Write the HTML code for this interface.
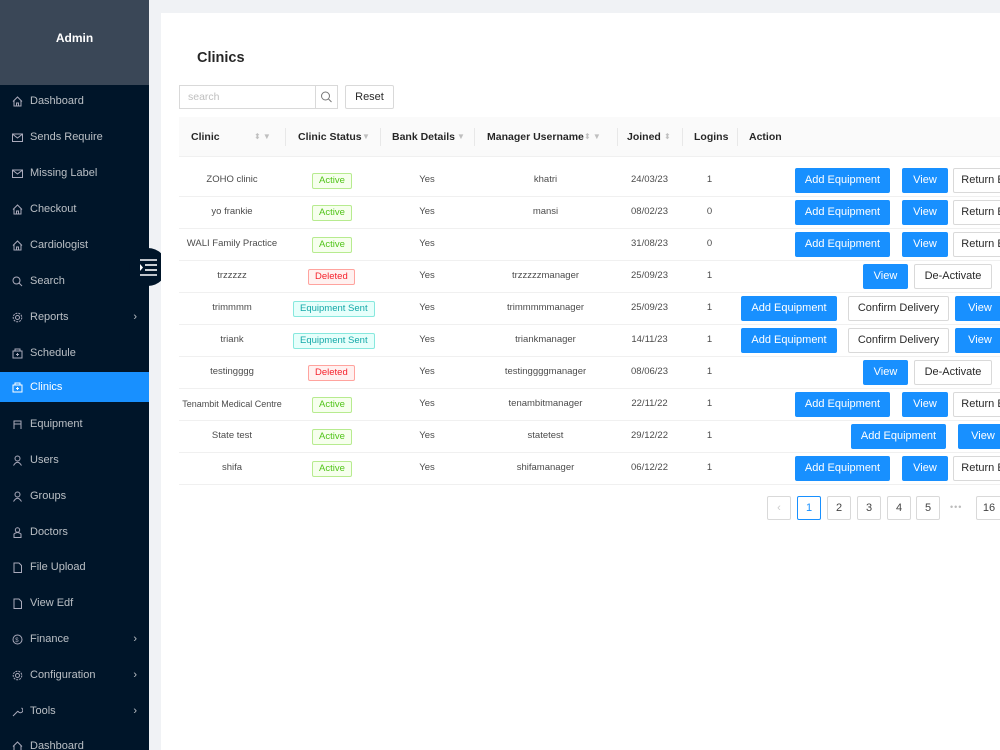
<!DOCTYPE html>
<html><head><meta charset="utf-8"><style>
*{box-sizing:border-box;margin:0;padding:0}
html{width:1000px;height:750px;overflow:hidden}
body{width:1000px;height:750px;overflow:hidden;background:#f0f2f5;font-family:"Liberation Sans","DejaVu Sans",sans-serif;position:relative;color:rgba(0,0,0,.85)}
.sb{position:absolute;left:0;top:0;width:149px;height:750px;background:#001529}
.sbh{position:absolute;left:0;top:0;width:149px;height:85px;background:#3a4757;color:#fff;font-weight:bold;font-size:12px;text-align:center;line-height:76px}
.mi{position:absolute;left:0;width:149px;height:30px;line-height:30px;color:rgba(255,255,255,.72);font-size:11px;padding-left:30px}
.mi svg{position:absolute;left:12px;top:10px}
.mi.act{background:#1890ff;color:#fff}
.arr{position:absolute;right:12px;top:0;font-size:11px}
.tog{position:absolute;left:129px;top:248px;width:38px;height:38px;border-radius:19px;background:#001529}
.card{position:absolute;left:161px;top:13px;width:839px;height:737px;background:#fff}
.a{position:absolute}
.t{position:absolute;font-size:9.5px;color:rgba(0,0,0,.72);text-align:center;line-height:32px;height:32px;white-space:nowrap}
.tag{position:absolute;font-size:9.5px;height:16px;line-height:14px;padding:0 6px;border:1px solid;border-radius:2px;white-space:nowrap}
.g{color:#52c41a;background:#f6ffed;border-color:#b7eb8f}
.r{color:#f5222d;background:#fff1f0;border-color:#ffa39e}
.c{color:#13a8a8;background:#e6fffb;border-color:#87e8de}
.b{position:absolute;height:25px;line-height:23px;font-size:11px;text-align:center;border:1px solid #d9d9d9;background:#fff;color:rgba(0,0,0,.85);border-radius:2px;white-space:nowrap;overflow:hidden}
.bp{background:#1890ff;border-color:#1890ff;color:#fff}
.line{position:absolute;left:179px;width:821px;height:1px;background:#f0f0f0}
.th{position:absolute;top:117px;height:40px;line-height:40px;font-size:10.5px;font-weight:bold;color:rgba(0,0,0,.85);white-space:nowrap}
.sep{position:absolute;top:128px;width:1px;height:18px;background:#e8e8e8}
.ic{position:absolute;top:117px;line-height:40px;font-size:8px;color:#bfbfbf}
.pg{position:absolute;top:496px;width:24px;height:24px;border:1px solid #d9d9d9;border-radius:2px;font-size:11px;text-align:center;line-height:22px;color:rgba(0,0,0,.75)}
</style></head><body>
<div class="sb">
<div class="sbh">Admin</div>
</div>
<div class="tog"><svg width="38" height="38" viewBox="0 0 38 38"><g stroke="#fff" stroke-width="1.6"><line x1="11" y1="12" x2="28" y2="12"/><line x1="16" y1="17" x2="28" y2="17"/><line x1="16" y1="22" x2="28" y2="22"/><line x1="11" y1="27" x2="28" y2="27"/></g><path d="M11 16 L14 19.5 L11 23Z" fill="#fff"/></svg></div>

<div class="mi" style="top:86px"><svg width="11" height="11" viewBox="0 0 11 11" fill="none" stroke="#aab" stroke-width="1"><path d="M1 5.5 L5.5 1 L10 5.5 M2 4.5 V10 H9 V4.5 M4.5 10 V7 H6.5 V10"/></svg>Dashboard</div>
<div class="mi" style="top:122px"><svg width="11" height="11" viewBox="0 0 11 11" fill="none" stroke="#aab"><rect x="0.5" y="2" width="10" height="7.5"/><path d="M1 2.5 L5.5 6 L10 2.5"/></svg>Sends Require</div>
<div class="mi" style="top:158px"><svg width="11" height="11" viewBox="0 0 11 11" fill="none" stroke="#aab"><rect x="0.5" y="2" width="10" height="7.5"/><path d="M1 2.5 L5.5 6 L10 2.5"/></svg>Missing Label</div>
<div class="mi" style="top:194px"><svg width="11" height="11" viewBox="0 0 11 11" fill="none" stroke="#aab"><path d="M1 5.5 L5.5 1 L10 5.5 M2 4.5 V10 H9 V4.5 M4.5 10 V7 H6.5 V10"/></svg>Checkout</div>
<div class="mi" style="top:230px"><svg width="11" height="11" viewBox="0 0 11 11" fill="none" stroke="#aab"><path d="M1 5.5 L5.5 1 L10 5.5 M2 4.5 V10 H9 V4.5 M4.5 10 V7 H6.5 V10"/></svg>Cardiologist</div>
<div class="mi" style="top:266px"><svg width="11" height="11" viewBox="0 0 11 11" fill="none" stroke="#aab"><circle cx="4.5" cy="4.5" r="3.5"/><path d="M7 7 L10 10"/></svg>Search</div>
<div class="mi" style="top:302px"><svg width="11" height="11" viewBox="0 0 11 11" fill="none" stroke="#aab"><circle cx="5.5" cy="5.5" r="2"/><circle cx="5.5" cy="5.5" r="4.3" stroke-dasharray="2 1"/></svg>Reports<span class="arr">›</span></div>
<div class="mi" style="top:338px"><svg width="11" height="11" viewBox="0 0 11 11" fill="none" stroke="#aab"><rect x="1" y="3" width="9" height="7"/><path d="M3 3 V1 H8 V3 M5.5 5 V8 M4 6.5 H7"/></svg>Schedule</div>
<div class="mi act" style="top:372px"><svg width="11" height="11" viewBox="0 0 11 11" fill="none" stroke="#fff"><rect x="1" y="3" width="9" height="7"/><path d="M3 3 V1 H8 V3 M5.5 5 V8 M4 6.5 H7"/></svg>Clinics</div>
<div class="mi" style="top:409px"><svg width="11" height="11" viewBox="0 0 11 11" fill="none" stroke="#aab"><path d="M2 10 V2 H9 V10 M2 5 H9"/></svg>Equipment</div>
<div class="mi" style="top:445px"><svg width="11" height="11" viewBox="0 0 11 11" fill="none" stroke="#aab"><circle cx="5.5" cy="3.5" r="2.5"/><path d="M1.5 10.5 Q5.5 4 9.5 10.5"/></svg>Users</div>
<div class="mi" style="top:481px"><svg width="11" height="11" viewBox="0 0 11 11" fill="none" stroke="#aab"><circle cx="5.5" cy="3.5" r="2.5"/><path d="M1.5 10.5 Q5.5 4 9.5 10.5"/></svg>Groups</div>
<div class="mi" style="top:517px"><svg width="11" height="11" viewBox="0 0 11 11" fill="none" stroke="#aab"><circle cx="5.5" cy="3" r="2.2"/><path d="M2 10.5 V7 Q5.5 4 9 7 V10.5 Z"/></svg>Doctors</div>
<div class="mi" style="top:552px"><svg width="11" height="11" viewBox="0 0 11 11" fill="none" stroke="#aab"><path d="M2 1 H7 L9.5 3.5 V10.5 H2 Z"/></svg>File Upload</div>
<div class="mi" style="top:588px"><svg width="11" height="11" viewBox="0 0 11 11" fill="none" stroke="#aab"><path d="M2 1 H7 L9.5 3.5 V10.5 H2 Z"/></svg>View Edf</div>
<div class="mi" style="top:624px"><svg width="11" height="11" viewBox="0 0 11 11" fill="none" stroke="#aab"><circle cx="5.5" cy="5.5" r="4.5"/><text x="3.3" y="8" font-size="6" fill="#aab" stroke="none">$</text></svg>Finance<span class="arr">›</span></div>
<div class="mi" style="top:660px"><svg width="11" height="11" viewBox="0 0 11 11" fill="none" stroke="#aab"><circle cx="5.5" cy="5.5" r="2"/><circle cx="5.5" cy="5.5" r="4.3" stroke-dasharray="2 1"/></svg>Configuration<span class="arr">›</span></div>
<div class="mi" style="top:696px"><svg width="11" height="11" viewBox="0 0 11 11" fill="none" stroke="#aab"><path d="M1 10 L6 5 M6 5 A2.5 2.5 0 1 0 9.5 2"/></svg>Tools<span class="arr">›</span></div>
<div class="mi" style="top:731px"><svg width="11" height="11" viewBox="0 0 11 11" fill="none" stroke="#aab"><path d="M1 5.5 L5.5 1 L10 5.5 M2 4.5 V10 H9 V4.5"/></svg>Dashboard</div>

<div class="card"></div>
<div class="a" style="left:197px;top:50px;font-size:14.5px;font-weight:bold;color:rgba(0,0,0,.85)">Clinics</div>
<div class="a" style="left:179px;top:85px;width:137px;height:24px;border:1px solid #d9d9d9;font-size:10.5px;color:#bfbfbf;line-height:22px;padding-left:8px">search</div>
<div class="a" style="left:315px;top:85px;width:23px;height:24px;border:1px solid #d9d9d9"><svg width="21" height="22" viewBox="0 0 21 22" fill="none" stroke="#777"><circle cx="9.5" cy="10" r="4"/><path d="M12.5 13 L15.5 16"/></svg></div>
<div class="b" style="left:345px;top:85px;width:49px;height:24px;line-height:22px;font-size:11px">Reset</div>

<div class="a" style="left:179px;top:117px;width:821px;height:40px;background:#fafafa;border-bottom:1px solid #f0f0f0"></div>
<div class="th" style="left:191px">Clinic</div><div class="ic" style="left:254px">⬍ ▼</div><div class="sep" style="left:285px"></div>
<div class="th" style="left:298px">Clinic Status</div><div class="ic" style="left:362px">▼</div><div class="sep" style="left:380px"></div>
<div class="th" style="left:392px">Bank Details</div><div class="ic" style="left:457px">▼</div><div class="sep" style="left:474px"></div>
<div class="th" style="left:487px">Manager Username</div><div class="ic" style="left:584px">⬍ ▼</div><div class="sep" style="left:617px"></div>
<div class="th" style="left:627px">Joined</div><div class="ic" style="left:664px">⬍</div><div class="sep" style="left:682px"></div>
<div class="th" style="left:694px">Logins</div><div class="sep" style="left:737px"></div>
<div class="th" style="left:749px">Action</div>

<div class="t" style="left:179px;width:106px;top:164px">ZOHO clinic</div><div class="tag g" style="left:312px;top:173px">Active</div><div class="t" style="left:380px;width:94px;top:164px">Yes</div><div class="t" style="left:474px;width:143px;top:164px">khatri</div><div class="t" style="left:617px;width:65px;top:164px">24/03/23</div><div class="t" style="left:682px;width:55px;top:164px">1</div>
<div class="line" style="top:196px"></div>
<div class="t" style="left:179px;width:106px;top:196px">yo frankie</div><div class="tag g" style="left:312px;top:205px">Active</div><div class="t" style="left:380px;width:94px;top:196px">Yes</div><div class="t" style="left:474px;width:143px;top:196px">mansi</div><div class="t" style="left:617px;width:65px;top:196px">08/02/23</div><div class="t" style="left:682px;width:55px;top:196px">0</div>
<div class="line" style="top:228px"></div>
<div class="t" style="left:179px;width:106px;top:228px">WALI Family Practice</div><div class="tag g" style="left:312px;top:237px">Active</div><div class="t" style="left:380px;width:94px;top:228px">Yes</div><div class="t" style="left:617px;width:65px;top:228px">31/08/23</div><div class="t" style="left:682px;width:55px;top:228px">0</div>
<div class="line" style="top:260px"></div>
<div class="t" style="left:179px;width:106px;top:260px">trzzzzz</div><div class="tag r" style="left:308px;top:269px">Deleted</div><div class="t" style="left:380px;width:94px;top:260px">Yes</div><div class="t" style="left:474px;width:143px;top:260px">trzzzzzmanager</div><div class="t" style="left:617px;width:65px;top:260px">25/09/23</div><div class="t" style="left:682px;width:55px;top:260px">1</div>
<div class="line" style="top:292px"></div>
<div class="t" style="left:179px;width:106px;top:292px">trimmmm</div><div class="tag c" style="left:293px;top:301px">Equipment Sent</div><div class="t" style="left:380px;width:94px;top:292px">Yes</div><div class="t" style="left:474px;width:143px;top:292px">trimmmmmanager</div><div class="t" style="left:617px;width:65px;top:292px">25/09/23</div><div class="t" style="left:682px;width:55px;top:292px">1</div>
<div class="line" style="top:324px"></div>
<div class="t" style="left:179px;width:106px;top:324px">triank</div><div class="tag c" style="left:293px;top:333px">Equipment Sent</div><div class="t" style="left:380px;width:94px;top:324px">Yes</div><div class="t" style="left:474px;width:143px;top:324px">triankmanager</div><div class="t" style="left:617px;width:65px;top:324px">14/11/23</div><div class="t" style="left:682px;width:55px;top:324px">1</div>
<div class="line" style="top:356px"></div>
<div class="t" style="left:179px;width:106px;top:356px">testingggg</div><div class="tag r" style="left:308px;top:365px">Deleted</div><div class="t" style="left:380px;width:94px;top:356px">Yes</div><div class="t" style="left:474px;width:143px;top:356px">testinggggmanager</div><div class="t" style="left:617px;width:65px;top:356px">08/06/23</div><div class="t" style="left:682px;width:55px;top:356px">1</div>
<div class="line" style="top:388px"></div>
<div class="t" style="left:172px;width:120px;top:388px;font-size:9px">Tenambit Medical Centre</div><div class="tag g" style="left:312px;top:397px">Active</div><div class="t" style="left:380px;width:94px;top:388px">Yes</div><div class="t" style="left:474px;width:143px;top:388px">tenambitmanager</div><div class="t" style="left:617px;width:65px;top:388px">22/11/22</div><div class="t" style="left:682px;width:55px;top:388px">1</div>
<div class="line" style="top:420px"></div>
<div class="t" style="left:179px;width:106px;top:420px">State test</div><div class="tag g" style="left:312px;top:429px">Active</div><div class="t" style="left:380px;width:94px;top:420px">Yes</div><div class="t" style="left:474px;width:143px;top:420px">statetest</div><div class="t" style="left:617px;width:65px;top:420px">29/12/22</div><div class="t" style="left:682px;width:55px;top:420px">1</div>
<div class="line" style="top:452px"></div>
<div class="t" style="left:179px;width:106px;top:452px">shifa</div><div class="tag g" style="left:312px;top:461px">Active</div><div class="t" style="left:380px;width:94px;top:452px">Yes</div><div class="t" style="left:474px;width:143px;top:452px">shifamanager</div><div class="t" style="left:617px;width:65px;top:452px">06/12/22</div><div class="t" style="left:682px;width:55px;top:452px">1</div>
<div class="line" style="top:484px"></div>

<div class="b bp" style="left:795px;top:168px;width:95px">Add Equipment</div><div class="b bp" style="left:902px;top:168px;width:46px">View</div><div class="b" style="left:953px;top:168px;width:60px">Return E</div>
<div class="b bp" style="left:795px;top:200px;width:95px">Add Equipment</div><div class="b bp" style="left:902px;top:200px;width:46px">View</div><div class="b" style="left:953px;top:200px;width:60px">Return E</div>
<div class="b bp" style="left:795px;top:232px;width:95px">Add Equipment</div><div class="b bp" style="left:902px;top:232px;width:46px">View</div><div class="b" style="left:953px;top:232px;width:60px">Return E</div>
<div class="b bp" style="left:863px;top:264px;width:45px">View</div><div class="b" style="left:914px;top:264px;width:78px">De-Activate</div>
<div class="b bp" style="left:741px;top:296px;width:96px">Add Equipment</div><div class="b" style="left:848px;top:296px;width:101px">Confirm Delivery</div><div class="b bp" style="left:955px;top:296px;width:50px">View</div>
<div class="b bp" style="left:741px;top:328px;width:96px">Add Equipment</div><div class="b" style="left:848px;top:328px;width:101px">Confirm Delivery</div><div class="b bp" style="left:955px;top:328px;width:50px">View</div>
<div class="b bp" style="left:863px;top:360px;width:45px">View</div><div class="b" style="left:914px;top:360px;width:78px">De-Activate</div>
<div class="b bp" style="left:795px;top:392px;width:95px">Add Equipment</div><div class="b bp" style="left:902px;top:392px;width:46px">View</div><div class="b" style="left:953px;top:392px;width:60px">Return E</div>
<div class="b bp" style="left:851px;top:424px;width:95px">Add Equipment</div><div class="b bp" style="left:958px;top:424px;width:50px">View</div>
<div class="b bp" style="left:795px;top:456px;width:95px">Add Equipment</div><div class="b bp" style="left:902px;top:456px;width:46px">View</div><div class="b" style="left:953px;top:456px;width:60px">Return E</div>

<div class="pg" style="left:767px;color:#ccc">‹</div>
<div class="pg" style="left:797px;border-color:#1890ff;color:#1890ff">1</div>
<div class="pg" style="left:827px">2</div>
<div class="pg" style="left:857px">3</div>
<div class="pg" style="left:887px">4</div>
<div class="pg" style="left:916px">5</div>
<div class="a" style="left:950px;top:502px;font-size:9px;color:#bbb;letter-spacing:1px">•••</div>
<div class="pg" style="left:976px;width:26px">16</div>
</body></html>
